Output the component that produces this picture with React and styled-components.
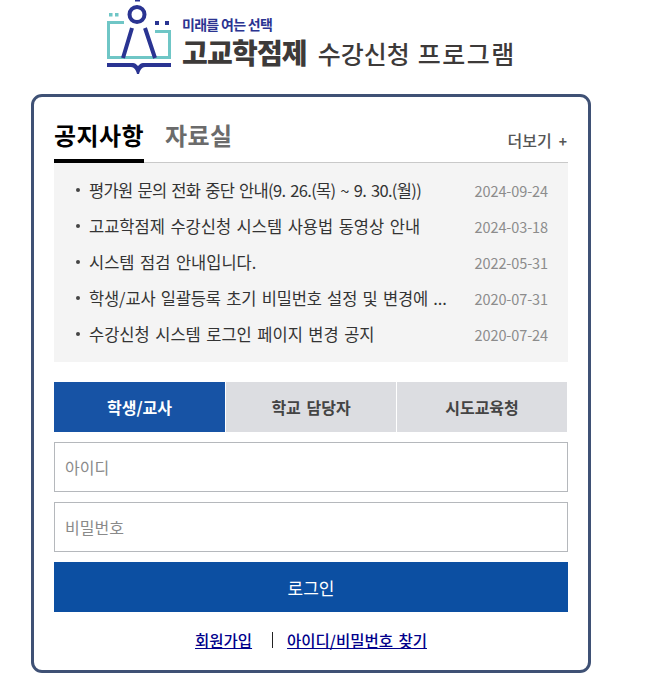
import React from 'react';
import styled, { createGlobalStyle } from 'styled-components';

const notices = [
  { title: '평가원 문의 전화 중단 안내(9. 26.(목) ~ 9. 30.(월))', date: '2024-09-24', tracking: -0.66 },
  { title: '고교학점제 수강신청 시스템 사용법 동영상 안내', date: '2024-03-18' },
  { title: '시스템 점검 안내입니다.', date: '2022-05-31' },
  { title: '학생/교사 일괄등록 초기 비밀번호 설정 및 변경에 ...', date: '2020-07-31', tracking: -0.15 },
  { title: '수강신청 시스템 로그인 페이지 변경 공지', date: '2020-07-24' },
];

const userTypes = ['학생/교사', '학교 담당자', '시도교육청'];

const GlobalStyle = createGlobalStyle`
  * {
    box-sizing: border-box;
  }
  body {
    margin: 0;
    background: #fff;
    font-family: "Noto Sans CJK KR", "Noto Sans", sans-serif;
  }
`;

const Page = styled.div`
  width: 657px;
  height: 689px;
  padding-left: 31px;
  overflow: hidden;
`;

const Header = styled.header`
  display: flex;
  align-items: flex-start;
  height: 94px;
  padding-left: 76px;
`;

const LogoText = styled.div`
  margin-left: 11px;
  padding-top: 14px;
`;

const Slogan = styled.div`
  height: 19px;
  font-size: 14px;
  line-height: 20px;
  font-weight: 700;
  letter-spacing: -0.7px;
  color: #2b3491;
`;

const TitleRow = styled.div`
  display: flex;
  align-items: baseline;
  height: 38px;
  line-height: 38px;
  color: #3d3a39;
`;

const TitleStrong = styled.span`
  font-size: 28px;
  font-weight: 900;
  letter-spacing: -0.8px;
`;

const TitleLight = styled.span`
  margin-left: ${({ $wide }) => ($wide ? '8px' : '11px')};
  font-size: 25px;
  font-weight: 500;
  letter-spacing: ${({ $wide }) => ($wide ? '1.5px' : '0')};
`;

const Card = styled.main`
  width: 560px;
  height: 579px;
  padding: 20px 20px 0;
  background: #fff;
  border: 3px solid #3f5175;
  border-radius: 11px;
`;

const BoardHead = styled.div`
  display: flex;
  align-items: flex-end;
  height: 46px;
  border-bottom: 1px solid #c9c9c9;
`;

const BoardTab = styled.div`
  height: 46px;
  margin-right: 21px;
  margin-bottom: -1px;
  font-size: 24px;
  line-height: 36px;
  font-weight: 700;
  letter-spacing: 0.4px;
  color: ${({ $active }) => ($active ? '#000' : '#6b6b6b')};
  border-bottom: 4px solid ${({ $active }) => ($active ? '#000' : 'transparent')};
`;

const More = styled.a`
  display: flex;
  align-items: center;
  gap: 7px;
  margin-left: auto;
  height: 44px;
  padding-right: 1px;
  font-size: 16px;
  font-weight: 500;
  color: #555;
`;

const Plus = styled.span`
  font-size: 14px;
  font-weight: 700;
  line-height: 1;
  padding-top: 2px;
`;

const NoticeList = styled.ul`
  display: flex;
  flex-direction: column;
  height: 199px;
  margin: 0;
  padding: 9px 20px 9px 22px;
  list-style: none;
  background: #f4f4f4;
`;

const NoticeRow = styled.li`
  display: flex;
  align-items: center;
  height: 36px;
  font-size: 16.5px;
  word-spacing: 1.8px;
  color: #333;
`;

const Bullet = styled.span`
  flex: none;
  width: 4px;
  height: 4px;
  margin-right: 9px;
  border-radius: 50%;
  background: #444;
`;

const NoticeTitle = styled.span`
  width: 362px;
  white-space: nowrap;
  letter-spacing: ${({ $tracking }) => $tracking || 0}px;
`;

const NoticeDate = styled.span`
  margin-left: auto;
  font-size: 14.5px;
  letter-spacing: -0.1px;
  color: #8c8c8c;
`;

const TypeTabs = styled.div`
  display: grid;
  grid-template-columns: 171px 170px 170px;
  gap: 1px;
  height: 50px;
  margin-top: 20px;
`;

const TypeTab = styled.button`
  border: 0;
  padding: 0;
  font-family: inherit;
  font-size: 16px;
  font-weight: 700;
  word-spacing: 2px;
  color: ${({ $active }) => ($active ? '#fff' : '#444')};
  background: ${({ $active }) => ($active ? '#1753a5' : '#dcdde1')};
`;

const Field = styled.input`
  display: block;
  width: 100%;
  height: 50px;
  margin-top: 10px;
  padding: 0 10px;
  border: 1px solid #b5b8bc;
  background: #fff;
  font-family: inherit;
  font-size: 16px;
  outline: none;

  &::placeholder {
    color: #8a8a8a;
    opacity: 1;
  }
`;

const LoginButton = styled.button`
  display: block;
  width: 100%;
  height: 50px;
  margin-top: 10px;
  border: 0;
  background: #0c4fa2;
  color: #fff;
  font-family: inherit;
  font-size: 17px;
`;

const Links = styled.div`
  display: flex;
  justify-content: center;
  align-items: center;
  height: 16px;
  margin-top: 20px;
`;

const JoinLink = styled.a`
  font-size: 15.5px;
  font-weight: 500;
  word-spacing: 2px;
  color: #00008b;
  text-decoration: underline;
`;

const Divider = styled.span`
  width: 1px;
  height: 16px;
  margin: 0 14px 0 20px;
  background: #222;
`;

function Logo() {
  return (
    <svg width="64" height="74" viewBox="0 0 64 74" fill="none" style={{ flex: 'none' }}>
      <g fill="#6fc6c6">
        <rect x="2" y="13" width="3.5" height="3.5" />
        <rect x="8" y="13" width="3.5" height="3.5" />
        <path d="M0 21h17v3H3v32h58V33H48v-3h16v29H0z" />
      </g>
      <g fill="#2a3492">
        <rect x="48" y="21" width="4" height="4" />
        <rect x="58" y="21" width="4" height="4" />
        <rect x="28" y="0" width="5" height="1.5" />
      </g>
      <circle cx="30" cy="14.5" r="7.5" stroke="#2a3492" strokeWidth="4" />
      <path d="M25 28L16 58M38 28L48 58" stroke="#2a3492" strokeWidth="4" />
      <path
        d="M0 63h26c2 0 3 1 5 3 2-2 3-3 5-3h28v4H38c-3 0-5 3-6 7h-2c-1-4-3-7-6-7H0z"
        fill="#2a3492"
      />
    </svg>
  );
}

export default function App() {
  return (
    <Page>
      <GlobalStyle />
      <Header>
        <Logo />
        <LogoText>
          <Slogan>미래를 여는 선택</Slogan>
          <TitleRow>
            <TitleStrong>고교학점제</TitleStrong>
            <TitleLight>수강신청</TitleLight>
            <TitleLight $wide>프로그램</TitleLight>
          </TitleRow>
        </LogoText>
      </Header>
      <Card>
        <BoardHead>
          <BoardTab $active>공지사항</BoardTab>
          <BoardTab>자료실</BoardTab>
          <More>
            더보기 <Plus>+</Plus>
          </More>
        </BoardHead>
        <NoticeList>
          {notices.map((n) => (
            <NoticeRow key={n.date}>
              <Bullet />
              <NoticeTitle $tracking={n.tracking}>{n.title}</NoticeTitle>
              <NoticeDate>{n.date}</NoticeDate>
            </NoticeRow>
          ))}
        </NoticeList>
        <TypeTabs>
          {userTypes.map((t, i) => (
            <TypeTab key={t} $active={i === 0}>
              {t}
            </TypeTab>
          ))}
        </TypeTabs>
        <Field placeholder="아이디" />
        <Field type="password" placeholder="비밀번호" />
        <LoginButton>로그인</LoginButton>
        <Links>
          <JoinLink href="#">회원가입</JoinLink>
          <Divider />
          <JoinLink href="#">아이디/비밀번호 찾기</JoinLink>
        </Links>
      </Card>
    </Page>
  );
}
